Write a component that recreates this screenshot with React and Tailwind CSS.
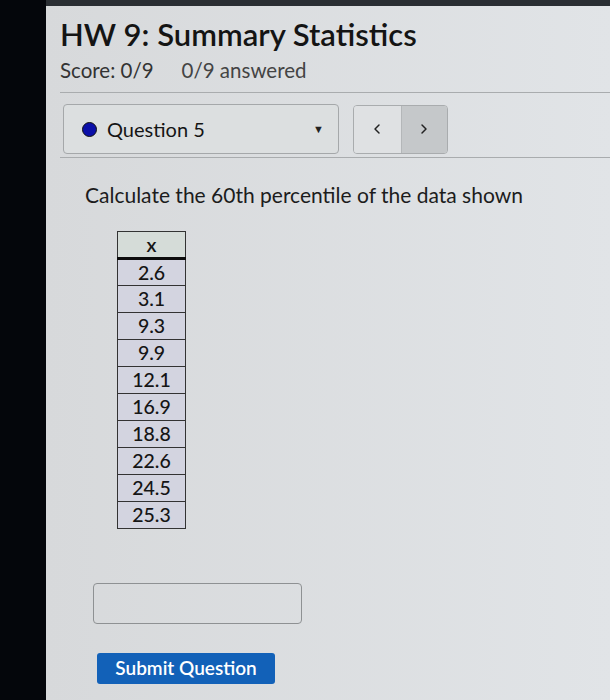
import { ChevronLeft, ChevronRight } from "lucide-react"

const values = ["2.6", "3.1", "9.3", "9.9", "12.1", "16.9", "18.8", "22.6", "24.5", "25.3"]

export default function App() {
  return (
    <div
      className="flex h-[700px] w-[610px] overflow-hidden bg-[#05070c]"
      style={{ fontFamily: "Lato, 'Open Sans', sans-serif" }}
    >
      <div className="w-[46px] shrink-0 bg-[#04060b]" />
      <div className="flex flex-1 flex-col">
        <div className="h-[6px] bg-[#2a2e33]" />
        <div className="flex flex-1 flex-col bg-gradient-to-r from-[#d7d9db] to-[#e1e4e7] pl-[14px] text-[#1a1a1a]">
          <h1 className="pt-[10px] text-[31px] font-semibold leading-[36px] text-[#141414]">
            HW 9: Summary Statistics
          </h1>
          <div className="mt-[6px] flex gap-[28px] text-[20.5px] leading-[24px] text-[#333]">
            <span>Score: 0/9</span>
            <span className="text-[#444]">0/9 answered</span>
          </div>

          <div className="mt-[10px] border-t border-[#a9acae]" />
          <div className="flex items-center gap-[14px] pb-[3px] pt-[11px] pl-[3px]">
            <div className="flex h-[50px] w-[276px] items-center rounded-[4px] border border-[#a5a8aa] bg-[#dcdfe0] pl-[18px] pr-[14px]">
              <span className="h-[15px] w-[15px] rounded-full border border-[#111] bg-[#0b0fa8]" />
              <span className="ml-[10px] text-[20px] text-[#151515]">Question 5</span>
              <span className="ml-auto text-[11px] text-[#222]">▼</span>
            </div>
            <div className="flex h-[49px] w-[95px] overflow-hidden rounded-[4px] border border-[#a9acae]">
              <div className="flex w-1/2 items-center justify-center bg-[#dfe1e3] text-[#222]">
                <ChevronLeft size={16} strokeWidth={2.2} />
              </div>
              <div className="flex w-1/2 items-center justify-center border-l border-[#b4b7b9] bg-[#c5c8ca] text-[#222]">
                <ChevronRight size={16} strokeWidth={2.2} />
              </div>
            </div>
          </div>
          <div className="border-t border-[#a9acae]" />

          <p className="mt-[25px] pl-[25px] text-[21px] leading-[24px] text-[#1c1c1c]">
            Calculate the 60th percentile of the data shown
          </p>

          <table className="ml-[57px] mt-[24px] w-[69px] border-collapse text-[19.5px] font-medium leading-[24px] text-[#151515]">
            <thead>
              <tr>
                <th className="h-[27px] border border-[#333] border-b-[3px] border-b-[#0c0c0c] bg-[#d5dcd8] font-semibold">
                  x
                </th>
              </tr>
            </thead>
            <tbody>
              {values.map((v) => (
                <tr key={v}>
                  <td className="h-[27px] border border-[#333] bg-[#d3d4e0] text-center">{v}</td>
                </tr>
              ))}
            </tbody>
          </table>

          <div className="ml-[33px] mt-[54px] h-[41px] w-[209px] rounded-[4px] border border-[#8e9193]" />

          <button className="ml-[37px] mt-[29px] h-[31px] w-[178px] rounded-[3px] bg-[#1261b8] text-[19px] font-semibold text-white">
            Submit Question
          </button>
        </div>
      </div>
    </div>
  )
}
